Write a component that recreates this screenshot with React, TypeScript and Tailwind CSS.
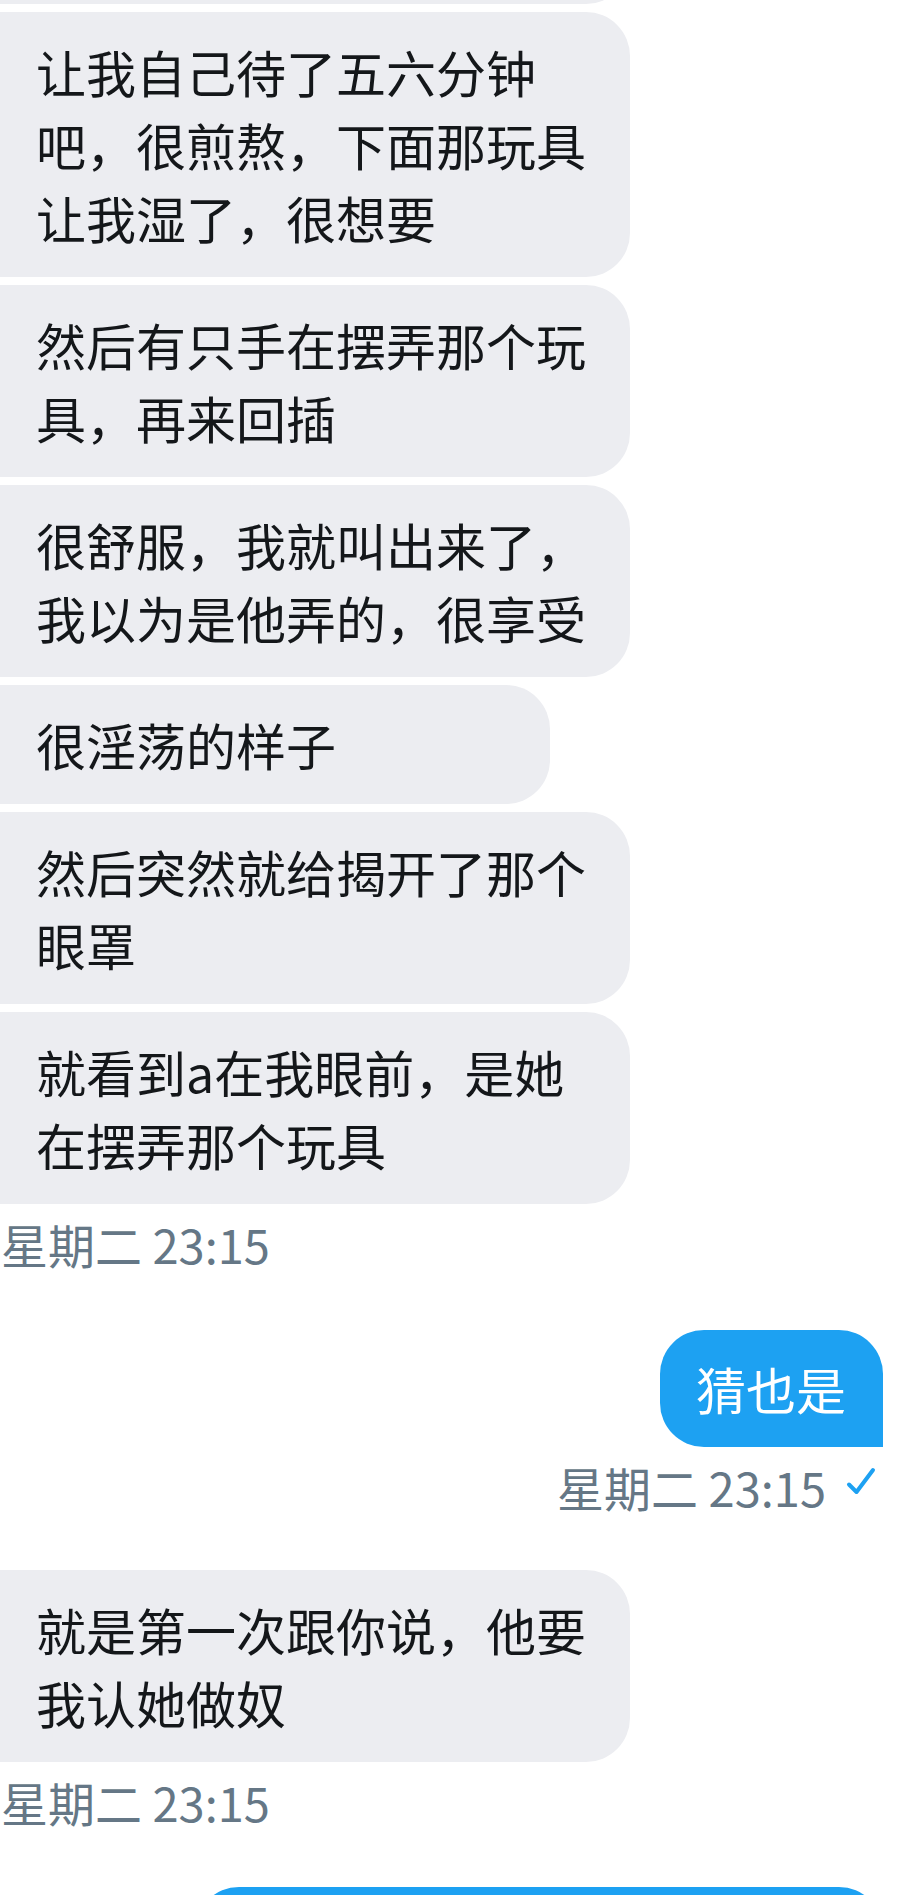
import React from 'react';

// Twitter-style DM thread, incoming on the left, outgoing on the right
const FONT = "font-['Noto_Sans_CJK_SC',Roboto,sans-serif]";

const Incoming: React.FC<{ children?: React.ReactNode; className?: string }> = ({ children, className = '' }) => (
  <div
    className={`bg-[#ecedf1] text-[#14171a] text-[50px] leading-[73px] pl-[36px] pr-[34px] py-[23px] rounded-r-[44px] max-w-[630px] ${className}`}
  >
    {children}
  </div>
);

const Outgoing: React.FC<{ children?: React.ReactNode; className?: string }> = ({ children, className = '' }) => (
  <div
    className={`bg-[#1da1f2] text-white text-[50px] leading-[73px] pl-[36px] pr-[37px] py-[22px] rounded-tl-[44px] rounded-tr-[44px] rounded-bl-[44px] ${className}`}
  >
    {children}
  </div>
);

const Stamp: React.FC<{ read?: boolean }> = ({ read }) => (
  <div className="flex items-start text-[47px] leading-[56px] h-[56px] text-[#657786]">
    <span>星期二 23:15</span>
    {read && (
      <svg className="ml-[20px] mt-[8px]" width="30" height="28" viewBox="0 0 30 28" fill="none">
        <path d="M3 17.5 L10.5 25 L27 3" stroke="#1da1f2" strokeWidth="4" strokeLinecap="round" strokeLinejoin="round" />
      </svg>
    )}
  </div>
);

export default function App() {
  return (
    <div className={`h-[1895px] w-full overflow-hidden bg-white ${FONT}`}>
      <div className="flex flex-col items-start gap-[8px]">
        {/* tail of the previous message, scrolled mostly out of view */}
        <Incoming className="w-[630px] h-[100px] -mt-[96px]" />
        <Incoming>让我自己待了五六分钟吧，很煎熬，下面那玩具让我湿了，很想要</Incoming>
        <Incoming>然后有只手在摆弄那个玩具，再来回插</Incoming>
        <Incoming>很舒服，我就叫出来了，我以为是他弄的，很享受</Incoming>
        <Incoming className="w-[550px]">很淫荡的样子</Incoming>
        <Incoming>然后突然就给揭开了那个眼罩</Incoming>
        <Incoming>就看到a在我眼前，是她在摆弄那个玩具</Incoming>
      </div>
      <div className="mt-[12px] pl-[1px]">
        <Stamp />
      </div>

      <div className="mt-[58px] flex justify-end pr-[36px]">
        <Outgoing>猜也是</Outgoing>
      </div>
      <div className="mt-[12px] flex justify-end pr-[43px]">
        <Stamp read />
      </div>

      <div className="mt-[55px] flex flex-col items-start">
        <Incoming>就是第一次跟你说，他要我认她做奴</Incoming>
      </div>
      <div className="mt-[12px] pl-[1px]">
        <Stamp />
      </div>

      <div className="mt-[57px] flex justify-end pr-[36px]">
        <Outgoing className="w-[688px] h-[117px]" />
      </div>
    </div>
  );
}
